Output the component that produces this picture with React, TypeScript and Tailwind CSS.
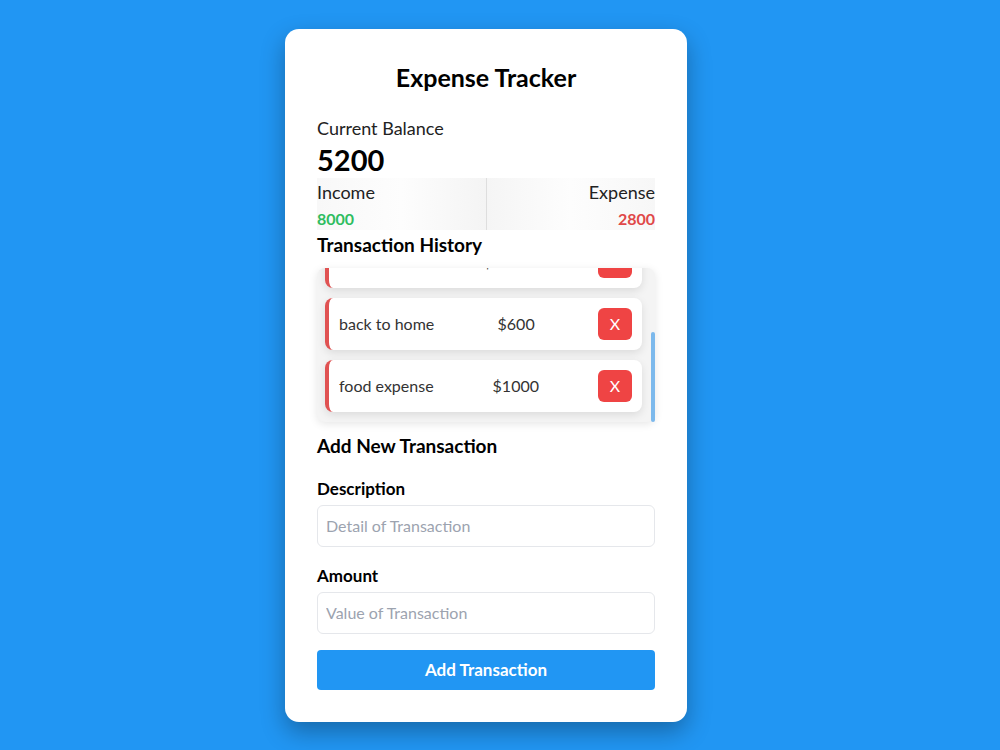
import { useEffect, useRef } from "react";

const transactions = [
  { id: 1, text: "salary", amount: 8000, income: true },
  { id: 2, text: "electric bill", amount: 1200, income: false },
  { id: 3, text: "back to home", amount: 600, income: false },
  { id: 4, text: "food expense", amount: 1000, income: false },
];

export default function App() {
  const listRef = useRef<HTMLDivElement>(null);

  useEffect(() => {
    // the screenshot shows the history scrolled to its end
    if (listRef.current) listRef.current.scrollTop = listRef.current.scrollHeight;
  }, []);

  return (
    <div className="flex min-h-screen items-center justify-center bg-[#2196f3] pr-7 font-['Lato','Liberation_Sans',sans-serif] text-black">
      <div className="w-[402px] rounded-[14px] bg-white px-8 pt-8 pb-8 shadow-[0_10px_25px_rgba(0,0,0,0.3)]">
        <h1 className="text-center text-[25px] leading-8 font-bold">Expense Tracker</h1>

        <div className="mt-[23px]">
          <p className="text-[18px] leading-6 text-[#222]">Current Balance</p>
          <p className="mt-[3px] text-[29px] leading-[34px] font-bold">5200</p>
        </div>

        <div className="mt-px flex h-[52px]">
          <div className="flex-1 bg-gradient-to-r from-[#f8f8f8] via-[#fdfdfd] to-[#f4f4f4] pt-[2px]">
            <p className="text-[18px] leading-6 text-[#222]">Income</p>
            <p className="mt-[5px] text-[16px] leading-5 font-bold text-[#2ebd5f]">8000</p>
          </div>
          <div className="w-px bg-[#dedede]" />
          <div className="flex-1 bg-gradient-to-r from-[#f5f5f5] via-[#fdfdfd] to-[#f7f7f7] pt-[2px] text-right">
            <p className="text-[18px] leading-6 text-[#222]">Expense</p>
            <p className="mt-[5px] text-[16px] leading-5 font-bold text-[#e04848]">2800</p>
          </div>
        </div>

        <h2 className="mt-[3px] text-[19px] leading-6 font-bold">Transaction History</h2>

        <div className="relative mt-[11px]">
          <div
            ref={listRef}
            className="flex h-[154px] flex-col gap-[10px] overflow-hidden rounded-lg bg-[#f4f4f4] py-[10px] pr-[13px] pl-2 shadow-[0_2px_8px_rgba(0,0,0,0.1)]"
          >
            {transactions.map((t) => (
              <div
                key={t.id}
                className={`flex h-[52px] shrink-0 items-center justify-between rounded-lg border-l-4 bg-white pr-[10px] pl-[10px] text-[16px] text-[#333] shadow-[0_3px_8px_rgba(0,0,0,0.1)] ${
                  t.income ? "border-[#2ebd5f]" : "border-[#e05252]"
                }`}
              >
                <span>{t.text}</span>
                <span>${t.amount}</span>
                <button className="flex h-8 w-[34px] items-center justify-center rounded-md bg-[#ef4444] text-[16px] text-white">
                  X
                </button>
              </div>
            ))}
          </div>
          {/* scrollbar thumb */}
          <div className="absolute right-0 bottom-0 h-[90px] w-1 rounded-full bg-[#7cb9ec]" />
        </div>

        <h2 className="mt-3 text-[19px] leading-6 font-bold">Add New Transaction</h2>

        <form className="mt-[21px]" onSubmit={(e) => e.preventDefault()}>
          <label className="block text-[17px] leading-5 font-bold">Description</label>
          <input
            type="text"
            placeholder="Detail of Transaction"
            className="mt-[6px] block h-[42px] w-full rounded-md border border-[#e5e7eb] px-2 text-[16px] placeholder:text-[#9ca3af] focus:outline-none"
          />

          <label className="mt-[19px] block text-[17px] leading-5 font-bold">Amount</label>
          <input
            type="number"
            placeholder="Value of Transaction"
            className="mt-[6px] block h-[42px] w-full rounded-md border border-[#e5e7eb] px-2 text-[16px] placeholder:text-[#9ca3af] focus:outline-none"
          />

          <button
            type="submit"
            className="mt-4 block h-10 w-full rounded bg-[#2196f3] text-[17px] font-bold text-white"
          >
            Add Transaction
          </button>
        </form>
      </div>
    </div>
  );
}
